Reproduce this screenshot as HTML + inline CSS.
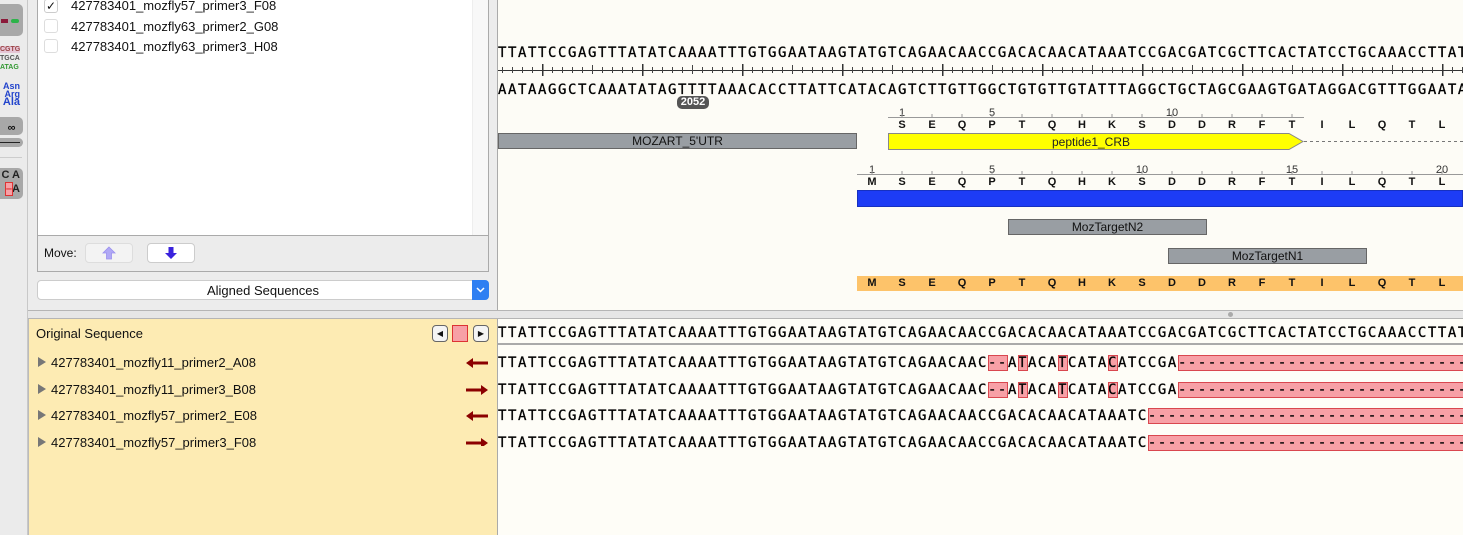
<!DOCTYPE html>
<html><head><meta charset="utf-8"><style>
*{margin:0;padding:0;box-sizing:border-box}
body{width:1463px;height:535px;overflow:hidden;position:relative;background:#fdfcf6;font-family:"Liberation Sans",sans-serif;font-size:13px;color:#111}
.a{position:absolute}
.seq{position:absolute;left:498px;font-family:"DejaVu Sans Mono",monospace;font-size:14px;letter-spacing:1.57px;white-space:pre;color:#000;line-height:16px;-webkit-text-stroke:0.3px #000}
.hl{background:#f7a0a6;outline:1px solid #d9474f;outline-offset:-1px}
.bar{position:absolute;height:16px;font-size:12px;text-align:center;line-height:15px;border:1px solid #666}
.aa{position:absolute;font-size:11px;font-weight:bold;width:20px;text-align:center;line-height:12px}
.nm{position:absolute;left:38px;font-size:13px}
.nm::before{content:"";display:inline-block;border-left:8px solid #777;border-top:5px solid transparent;border-bottom:5px solid transparent;margin-right:5px}
</style></head><body>
<!-- left toolbar -->
<div class="a" style="left:0;top:0;width:28px;height:535px;background:#ebebeb;border-right:1px solid #c8c8c8"></div>
<div class="a" style="left:0;top:4px;width:23px;height:32px;background:#a8a8a8;border-radius:0 5px 5px 0"></div>
<div class="a" style="left:1px;top:19px;width:7px;height:4px;background:#8b1a3a"></div>
<div class="a" style="left:11px;top:19px;width:8px;height:4px;background:#2db34a;border-radius:2px"></div>
<div class="a" style="left:0;top:45px;font:bold 7px 'Liberation Sans';line-height:9px;color:#944"><span style="background:#e6c6d6">CGTG</span><br><span style="color:#555">TGCA</span><br><span style="color:#393">ATAG</span></div>
<div class="a" style="left:0;top:82px;font:bold 9px 'Liberation Sans';line-height:8px;color:#2244cc;text-align:right;width:20px">Asn<br>Arg<br><span style="font-size:11px">Ala</span></div>
<div class="a" style="left:0;top:117px;width:23px;height:18px;background:#a8a8a8;border-radius:0 5px 5px 0;font-size:11px;font-weight:bold;text-align:center;line-height:22px">∞</div>
<div class="a" style="left:0;top:138px;width:23px;height:9px;background:#a8a8a8;border-radius:0 5px 5px 0"></div>
<div class="a" style="left:0;top:142px;width:20px;height:1px;background:#222"></div>
<div class="a" style="left:0;top:157px;width:22px;height:1px;background:#ccc"></div>
<div class="a" style="left:0;top:168px;width:23px;height:31px;background:#a8a8a8;border-radius:0 5px 5px 0;font:bold 11px 'Liberation Sans';color:#222;text-align:right;padding-right:3px;line-height:14px">C A<br><span style="background:#f7a0a6;outline:1px solid #d33;color:#d33">–</span>A</div>

<!-- left top panel -->
<div class="a" style="left:28px;top:0;width:469px;height:310px;background:#ececec"></div>
<div class="a" style="left:37px;top:0;width:452px;height:236px;background:#fff;border:1px solid #aaa;border-top:none"></div>
<div class="a" style="left:472px;top:0;width:16px;height:235px;background:#f8f8f8;border-left:1px solid #eee"></div>
<div class="a" style="left:44px;top:-1px;width:14px;height:14px;border:1px solid #ccc;border-radius:3px;background:#fff;font-size:12px;line-height:12px;text-align:center">✓</div>
<div class="a" style="left:44px;top:19px;width:14px;height:14px;border:1px solid #ddd;border-radius:3px"></div>
<div class="a" style="left:44px;top:39px;width:14px;height:14px;border:1px solid #ddd;border-radius:3px"></div>
<div class="a" style="left:71px;top:-2px">427783401_mozfly57_primer3_F08</div>
<div class="a" style="left:71px;top:19px">427783401_mozfly63_primer2_G08</div>
<div class="a" style="left:71px;top:39px">427783401_mozfly63_primer3_H08</div>
<div class="a" style="left:37px;top:235px;width:452px;height:37px;border:1px solid #aaa;border-top:none"></div>
<div class="a" style="left:44px;top:246px;font-size:12px">Move:</div>
<div class="a" style="left:85px;top:243px;width:48px;height:20px;background:#f3f3f3;border:1px solid #ddd;border-radius:4px"></div>
<svg class="a" style="left:101px;top:246px" width="16" height="14"><path d="M8 1L14 7H10.5V13H5.5V7H2Z" fill="#b0a8f5" stroke="#9a90ee" stroke-width="0.8"/></svg>
<div class="a" style="left:147px;top:243px;width:48px;height:20px;background:#fff;border:1px solid #ccc;border-radius:4px"></div>
<svg class="a" style="left:163px;top:246px" width="16" height="14"><path d="M8 13L14 7H10.5V1H5.5V7H2Z" fill="#3a22dd"/></svg>
<div class="a" style="left:37px;top:280px;width:452px;height:20px;background:#fff;border:1px solid #ccc;border-radius:4px;text-align:center;line-height:19px;font-size:13px">Aligned Sequences</div>
<div class="a" style="left:472px;top:280px;width:17px;height:20px;background:#2f7ff2;border-radius:0 4px 4px 0"></div>
<svg class="a" style="left:475px;top:285px" width="11" height="10"><path d="M2 3L5.5 6.5L9 3" stroke="#fff" stroke-width="1.5" fill="none"/></svg>
<div class="a" style="left:497px;top:0;width:1px;height:310px;background:#aaa"></div>

<!-- top right -->
<div class="seq" style="top:45px">TTATTCCGAGTTTATATCAAAATTTGTGGAATAAGTATGTCAGAACAACCGACACAACATAAATCCGACGATCGCTTCACTATCCTGCAAACCTTAT</div>
<svg class="a" style="left:498px;top:60px" width="965" height="20">
<defs>
<pattern id="mn" width="10" height="20" patternUnits="userSpaceOnUse" x="4"><rect x="0" y="7" width="1" height="6" fill="#444"/></pattern>
<pattern id="mj" width="100" height="20" patternUnits="userSpaceOnUse" x="44"><rect x="0" y="4" width="1.5" height="12" fill="#333"/><rect x="50" y="5" width="1" height="9" fill="#444"/></pattern>
</defs>
<rect x="0" y="10" width="965" height="1" fill="#333"/>
<rect x="0" y="0" width="965" height="20" fill="url(#mn)"/>
<rect x="0" y="0" width="965" height="20" fill="url(#mj)"/>
</svg>
<div class="seq" style="top:82px">AATAAGGCTCAAATATAGTTTTAAACACCTTATTCATACAGTCTTGTTGGCTGTGTTGTATTTAGGCTGCTAGCGAAGTGATAGGACGTTTGGAATA</div>
<div class="a" style="left:677px;top:96px;width:32px;height:13px;background:#555;border-radius:5px;color:#fff;font-size:11px;font-weight:bold;text-align:center;line-height:13px">2052</div>

<div class="bar" style="left:498px;top:133px;width:359px;background:#999ea3;border-color:#666">MOZART_5'UTR</div>

<!-- peptide ruler -->
<div class="a" style="left:888px;top:117px;width:416px;height:1px;background:#999"></div>
<svg class="a" style="left:850px;top:100px" width="613" height="30">
<g fill="#333" font-family="Liberation Sans" font-size="11" text-anchor="middle">
<text x="52" y="16">1</text><text x="142" y="16">5</text><text x="322" y="16">10</text>
</g>
<g stroke="#999"><path d="M52 14v3M82 14v3M112 14v3M142 14v3M172 14v3M202 14v3M232 14v3M262 14v3M292 14v3M322 14v3M352 14v3M382 14v3M412 14v3M442 14v3"/></g>
</svg>
<svg class="a" style="left:886px;top:132px" width="577" height="19">
<path d="M2.5 1.5H403L417 9.5L403 17.5H2.5Z" fill="#ffff00" stroke="#888"/>
<text x="205" y="14" font-family="Liberation Sans" font-size="12" text-anchor="middle" fill="#222">peptide1_CRB</text>
<line x1="418" y1="9.5" x2="577" y2="9.5" stroke="#777" stroke-dasharray="3,3"/>
</svg>

<!-- CDS ruler -->
<div class="a" style="left:857px;top:174px;width:606px;height:1px;background:#999"></div>
<svg class="a" style="left:850px;top:157px" width="613" height="20">
<g fill="#333" font-family="Liberation Sans" font-size="11" text-anchor="middle">
<text x="22" y="16">1</text><text x="142" y="16">5</text><text x="292" y="16">10</text><text x="442" y="16">15</text><text x="592" y="16">20</text>
</g>
<g stroke="#999"><path d="M22 14v3M52 14v3M82 14v3M112 14v3M142 14v3M172 14v3M202 14v3M232 14v3M262 14v3M292 14v3M322 14v3M352 14v3M382 14v3M412 14v3M442 14v3M472 14v3M502 14v3M532 14v3M562 14v3M592 14v3"/></g>
</svg>
<div class="a" style="left:857px;top:190px;width:606px;height:17px;background:#1d3cf5;border:1px solid #1630c0"></div>
<div class="bar" style="left:1008px;top:219px;width:199px;background:#999ea3">MozTargetN2</div>
<div class="bar" style="left:1168px;top:248px;width:199px;background:#999ea3">MozTargetN1</div>
<div class="a" style="left:857px;top:276px;width:606px;height:15px;background:#fdc36a"></div>

<div class="aa" style="left:892px;top:119px">S</div><div class="aa" style="left:922px;top:119px">E</div><div class="aa" style="left:952px;top:119px">Q</div><div class="aa" style="left:982px;top:119px">P</div><div class="aa" style="left:1012px;top:119px">T</div><div class="aa" style="left:1042px;top:119px">Q</div><div class="aa" style="left:1072px;top:119px">H</div><div class="aa" style="left:1102px;top:119px">K</div><div class="aa" style="left:1132px;top:119px">S</div><div class="aa" style="left:1162px;top:119px">D</div><div class="aa" style="left:1192px;top:119px">D</div><div class="aa" style="left:1222px;top:119px">R</div><div class="aa" style="left:1252px;top:119px">F</div><div class="aa" style="left:1282px;top:119px">T</div><div class="aa" style="left:1312px;top:119px">I</div><div class="aa" style="left:1342px;top:119px">L</div><div class="aa" style="left:1372px;top:119px">Q</div><div class="aa" style="left:1402px;top:119px">T</div><div class="aa" style="left:1432px;top:119px">L</div>
<div class="aa" style="left:862px;top:176px">M</div><div class="aa" style="left:892px;top:176px">S</div><div class="aa" style="left:922px;top:176px">E</div><div class="aa" style="left:952px;top:176px">Q</div><div class="aa" style="left:982px;top:176px">P</div><div class="aa" style="left:1012px;top:176px">T</div><div class="aa" style="left:1042px;top:176px">Q</div><div class="aa" style="left:1072px;top:176px">H</div><div class="aa" style="left:1102px;top:176px">K</div><div class="aa" style="left:1132px;top:176px">S</div><div class="aa" style="left:1162px;top:176px">D</div><div class="aa" style="left:1192px;top:176px">D</div><div class="aa" style="left:1222px;top:176px">R</div><div class="aa" style="left:1252px;top:176px">F</div><div class="aa" style="left:1282px;top:176px">T</div><div class="aa" style="left:1312px;top:176px">I</div><div class="aa" style="left:1342px;top:176px">L</div><div class="aa" style="left:1372px;top:176px">Q</div><div class="aa" style="left:1402px;top:176px">T</div><div class="aa" style="left:1432px;top:176px">L</div>
<div class="aa" style="left:862px;top:277px">M</div><div class="aa" style="left:892px;top:277px">S</div><div class="aa" style="left:922px;top:277px">E</div><div class="aa" style="left:952px;top:277px">Q</div><div class="aa" style="left:982px;top:277px">P</div><div class="aa" style="left:1012px;top:277px">T</div><div class="aa" style="left:1042px;top:277px">Q</div><div class="aa" style="left:1072px;top:277px">H</div><div class="aa" style="left:1102px;top:277px">K</div><div class="aa" style="left:1132px;top:277px">S</div><div class="aa" style="left:1162px;top:277px">D</div><div class="aa" style="left:1192px;top:277px">D</div><div class="aa" style="left:1222px;top:277px">R</div><div class="aa" style="left:1252px;top:277px">F</div><div class="aa" style="left:1282px;top:277px">T</div><div class="aa" style="left:1312px;top:277px">I</div><div class="aa" style="left:1342px;top:277px">L</div><div class="aa" style="left:1372px;top:277px">Q</div><div class="aa" style="left:1402px;top:277px">T</div><div class="aa" style="left:1432px;top:277px">L</div>

<!-- splitter -->
<div class="a" style="left:28px;top:310px;width:1435px;height:9px;background:#e6e6e6;border-top:1px solid #b5b5b5;border-bottom:1px solid #b5b5b5"></div>
<div class="a" style="left:1228px;top:312px;width:5px;height:5px;border-radius:50%;background:#aaa"></div>

<!-- bottom left -->
<div class="a" style="left:28px;top:319px;width:469px;height:216px;background:#fdebb3;border-left:1px solid #bbb"></div>
<div class="a" style="left:497px;top:319px;width:1px;height:216px;background:#aaa"></div>
<div class="a" style="left:36px;top:326px">Original Sequence</div>
<div class="a" style="left:432px;top:325px;width:16px;height:17px;border:1px solid #666;border-radius:4px;background:#f4f4f4;font-size:8px;text-align:center;line-height:15px">◀</div>
<div class="a" style="left:452px;top:325px;width:16px;height:17px;border:1px solid #d33;background:#f7a0a6"></div>
<div class="a" style="left:473px;top:325px;width:16px;height:17px;border:1px solid #666;border-radius:4px;background:#f4f4f4;font-size:8px;text-align:center;line-height:15px">▶</div>
<div class="nm" style="top:355px">427783401_mozfly11_primer2_A08</div>
<div class="nm" style="top:382px">427783401_mozfly11_primer3_B08</div>
<div class="nm" style="top:408px">427783401_mozfly57_primer2_E08</div>
<div class="nm" style="top:435px">427783401_mozfly57_primer3_F08</div>
<svg class="a" style="left:464px;top:356px" width="26" height="90" fill="#8b0000">
<path d="M2 7L9 2V5.5H24V8.5H9V12Z"/>
<path d="M24 34L17 29V32.5H2V35.5H17V39Z"/>
<path d="M2 60L9 55V58.5H24V61.5H9V65Z"/>
<path d="M24 87L17 82V85.5H2V88.5H17V92Z"/>
</svg>

<!-- bottom right -->
<div class="a" style="left:498px;top:319px;width:965px;height:216px;background:#fefdf7;overflow:hidden">
<div class="a" style="left:0;top:24px;width:965px;height:2px;background:#aaa"></div>
</div>
<div style="position:absolute;left:0;top:0;width:1463px;height:535px;overflow:hidden">
<div class="seq" style="top:325px">TTATTCCGAGTTTATATCAAAATTTGTGGAATAAGTATGTCAGAACAACCGACACAACATAAATCCGACGATCGCTTCACTATCCTGCAAACCTTAT</div>
<div class="seq" style="top:355px">TTATTCCGAGTTTATATCAAAATTTGTGGAATAAGTATGTCAGAACAAC<span class="hl">--</span>A<span class="hl">T</span>ACA<span class="hl">T</span>CATA<span class="hl">C</span>ATCCGA<span class="hl">------------------------------------</span></div>
<div class="seq" style="top:382px">TTATTCCGAGTTTATATCAAAATTTGTGGAATAAGTATGTCAGAACAAC<span class="hl">--</span>A<span class="hl">T</span>ACA<span class="hl">T</span>CATA<span class="hl">C</span>ATCCGA<span class="hl">------------------------------------</span></div>
<div class="seq" style="top:408px">TTATTCCGAGTTTATATCAAAATTTGTGGAATAAGTATGTCAGAACAACCGACACAACATAAATC<span class="hl">----------------------------------------</span></div>
<div class="seq" style="top:435px">TTATTCCGAGTTTATATCAAAATTTGTGGAATAAGTATGTCAGAACAACCGACACAACATAAATC<span class="hl">----------------------------------------</span></div>
</div>
</body></html>
